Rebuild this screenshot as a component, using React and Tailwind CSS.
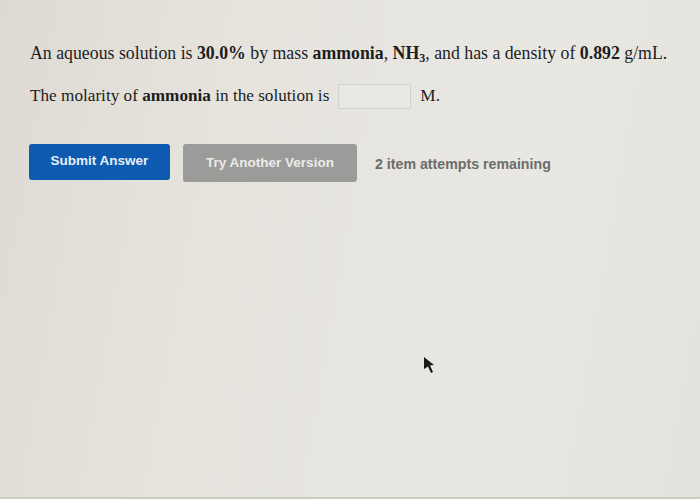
import React from "react";

const serif = { fontFamily: '"Liberation Serif", "Times New Roman", serif' };
const sans = { fontFamily: '"Liberation Sans", Arial, sans-serif' };

export default function App() {
  return (
    <div className="relative w-[700px] h-[499px] overflow-hidden bg-[linear-gradient(100deg,#dedad3_0%,#e6e3dd_30%,#e8e7e2_70%,#e3e2dc_100%)]">
      <div className="pl-[30px] pt-[41px] text-[#1d1d1d] text-[17.8px]" style={serif}>
        <p className="leading-[24px]">
          An aqueous solution is <b>30.0%</b> by mass <b>ammonia</b>, <b>NH<sub className="text-[12px]">3</sub></b>, and has a density of <b>0.892</b> g/mL.
        </p>
        <div className="mt-[18px] flex items-center h-[26px] text-[17.2px]">
          <span>
            The molarity of <b>ammonia</b> in the solution is
          </span>
          <span className="ml-[9px] w-[73px] h-[25px] border border-[#d4d2cc] bg-[#e9e8e3]"></span>
          <span className="ml-[9px]">M.</span>
        </div>
      </div>

      <div className="flex items-center pl-[29px] mt-[32px]" style={sans}>
        <button className="w-[141px] h-[36px] rounded-[3px] bg-[#0c5bb0] text-[#e7eef7] text-[13.5px] font-bold">
          Submit Answer
        </button>
        <button className="ml-[13px] mt-[3px] w-[174px] h-[38px] rounded-[3px] bg-[#9b9b99] text-[#ebebea] text-[13.5px] font-bold">
          Try Another Version
        </button>
        <span className="ml-[18px] mt-[7px] text-[#6c6c6b] text-[14.2px] font-bold">
          2 item attempts remaining
        </span>
      </div>

      <svg className="absolute left-[422px] top-[356px]" width="14" height="18" viewBox="0 0 14 18">
        <path d="M2 1 L12 9 L8 9.5 L11 16 L9 17 L6 10.5 L2 13 Z" fill="#1a1a1a" />
      </svg>
      <div className="absolute left-0 bottom-0 w-full h-[2px] bg-[#cfcbc3]"></div>
    </div>
  );
}
